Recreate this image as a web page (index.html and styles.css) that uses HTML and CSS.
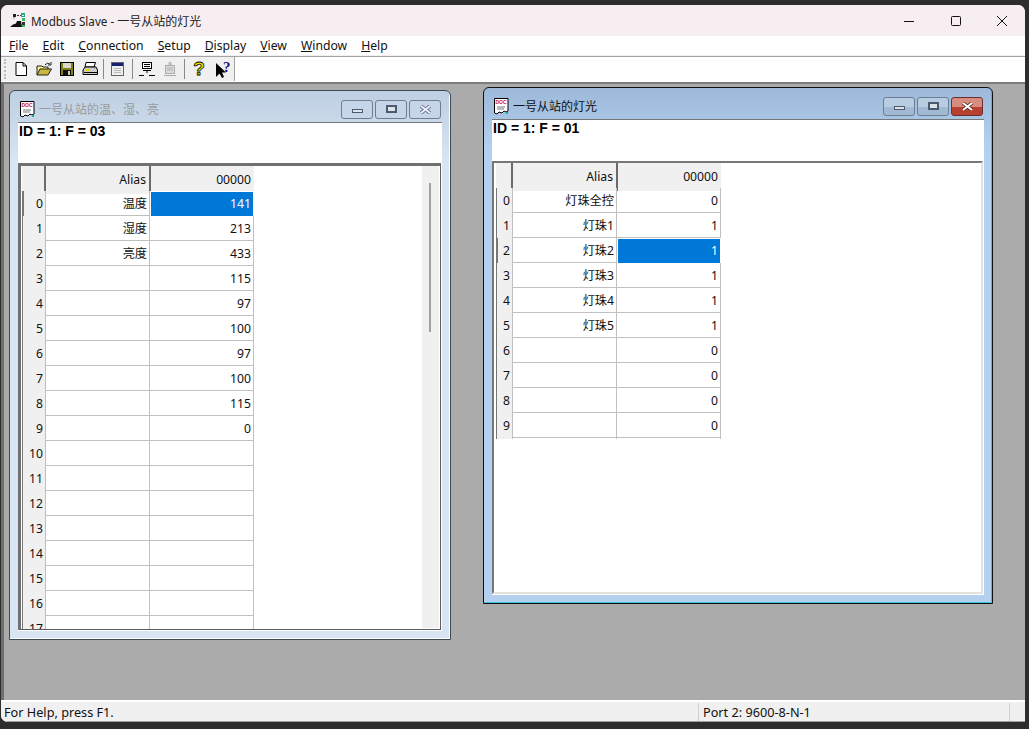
FILE: index.html
```html
<!DOCTYPE html>
<html lang="zh">
<head>
<meta charset="utf-8">
<title>Modbus Slave</title>
<link rel="stylesheet" href="styles.css">
</head>
<body>
<div class="app">
  <div class="titlebar">
    <svg class="app-icon" viewBox="0 0 16 16" width="16" height="16"><path d="M0 14L3 11.500L6 10.500L7 8L11 8L12 14Z" fill="#111"/><path d="M4 2.500H12M4 2.500V6" stroke="#333" stroke-dasharray="2 1" fill="none"/><rect x="3" y="1" width="3" height="3" fill="#222"/><rect x="11" y="0" width="4" height="4" fill="#2a8"/><rect x="12" y="2" width="2" height="1" fill="#fff"/><rect x="12" y="5" width="3" height="3" fill="#3b6"/><rect x="12" y="9" width="3" height="3" fill="#333"/><rect x="12" y="12" width="3" height="2" fill="#3b6"/></svg>
    <span class="app-title">Modbus Slave - <span class="cjk">一号从站的灯光</span></span>
    <div class="caption">
      <svg viewBox="0 0 10 10" width="10" height="10"><path d="M0 5.500H10" stroke="#111"/></svg>
      <svg viewBox="0 0 10 10" width="10" height="10"><rect x=".5" y=".5" width="9" height="9" rx="1" fill="none" stroke="#111"/></svg>
      <svg viewBox="0 0 10 10" width="10" height="10"><path d="M0 0L10 10M10 0L0 10" stroke="#111"/></svg>
    </div>
  </div>
  <nav class="menu">
    <span><u>F</u>ile</span><span><u>E</u>dit</span><span><u>C</u>onnection</span><span><u>S</u>etup</span><span><u>D</u>isplay</span><span><u>V</u>iew</span><span><u>W</u>indow</span><span><u>H</u>elp</span>
  </nav>
  <div class="toolbar">
    <div class="tools">
      <div class="grip"></div>
      <svg class="ic" viewBox="0 0 16 16"><path d="M3 1.500H10L13.500 5V14.500H3Z" fill="#fff" stroke="#000"/><path d="M10 1.500V5H13.500" fill="none" stroke="#000"/></svg>
      <svg class="ic" viewBox="0 0 16 16"><path d="M1 14V5H6L7 6H12V8" fill="#f6f090" stroke="#222"/><path d="M1 14L4 8H15.500L12 14Z" fill="#c8b840" stroke="#222"/><path d="M9 4Q11 1 14 3M15 1V4H12" fill="none" stroke="#222"/></svg>
      <svg class="ic" viewBox="0 0 16 16"><rect x="1.500" y="1.500" width="13" height="13" fill="#80801a" stroke="#000"/><rect x="4" y="2" width="8" height="5" fill="#d8d8c8"/><rect x="4" y="9" width="8" height="5" fill="#111"/><rect x="9" y="10" width="2" height="4" fill="#ccc"/></svg>
      <svg class="ic" viewBox="0 0 16 16"><path d="M4 1.500H13.500L12 6H3Z" fill="#fff" stroke="#000"/><path d="M3 6H14L15.500 9V13.500H1V9Z" fill="#ccc" stroke="#000"/><path d="M4 9H8" stroke="#dd0" stroke-width="2"/><path d="M2 11.500H15M5 13.500H15" stroke="#000"/></svg>
      <i class="sep s1"></i>
      <svg class="ic" viewBox="0 0 16 16"><rect x="2.500" y="1.500" width="12" height="13" fill="#eee" stroke="#666"/><rect x="3" y="2" width="11" height="3" fill="#12216e"/><path d="M5 7.500H12M5 9.500H12M5 11.500H12" stroke="#bbb"/></svg>
      <i class="sep"></i>
      <svg class="ic" viewBox="0 0 16 16"><rect x="3.500" y="1.500" width="9" height="6" fill="#fff" stroke="#000"/><path d="M5 3.500H11M5 5.500H11M4 9.500H12M8 10V12M0 14.500H5M10 14.500H16" stroke="#000"/></svg>
      <svg class="ic" viewBox="0 0 16 16"><rect x="6.500" y="1" width="3" height="3" fill="#bbb"/><rect x="3.500" y="4.500" width="9" height="8" fill="#ddd" stroke="#aaa"/><path d="M5 7H11M5 9H11M2 14.500H14" stroke="#aaa"/></svg>
      <i class="sep s3"></i>
      <span class="q">?</span>
      <svg class="ic ic-h" viewBox="0 0 16 16"><path d="M1 1V15L4.500 11.500L7 16L9 15L7 10.500H11Z" fill="#000"/></svg>
      <span class="q2">?</span>
    </div>
  </div>
  <div class="workspace">
    <section class="win win-a inactive">
      <header class="win-head">
        <svg class="doc" viewBox="0 0 16 17"><path d="M1.500 .5H15V13L13 14L11 13L9 15L6 14L4 16L1.500 15Z" fill="#fff" stroke="#000"/><text x="2.500" y="6" class="doc-t">DOC</text><path d="M4 9H12M4 11H11" stroke="#777"/><rect x="13" y="14" width="2" height="2" fill="#2a9"/></svg>
        <span class="win-title">一号从站的温、湿、亮</span>
        <div class="btns"><b class="btn"><i class="g-min"></i></b><b class="btn"><i class="g-max"></i></b><b class="btn"><svg class="g-x" viewBox="0 0 13 9"><path d="M2 1L11 8M11 1L2 8" stroke="#5a6a80" stroke-width="3.500"/><path d="M2 1L11 8M11 1L2 8" stroke="#eef" stroke-width="2"/></svg></b></div>
      </header>
      <div class="win-body">
        <div class="info">ID = 1: F = 03</div>
        <div class="view">
          <div class="grid">
            <div class="r hd"><span class="rh"></span><span class="c">Alias</span><span class="c vhd">00000</span></div>
            <div class="r"><span class="rh cur">0</span><span class="c">温度</span><span class="c sel">141</span></div>
            <div class="r"><span class="rh">1</span><span class="c">湿度</span><span class="c">213</span></div>
            <div class="r"><span class="rh">2</span><span class="c">亮度</span><span class="c">433</span></div>
            <div class="r"><span class="rh">3</span><span class="c"></span><span class="c">115</span></div>
            <div class="r"><span class="rh">4</span><span class="c"></span><span class="c">97</span></div>
            <div class="r"><span class="rh">5</span><span class="c"></span><span class="c">100</span></div>
            <div class="r"><span class="rh">6</span><span class="c"></span><span class="c">97</span></div>
            <div class="r"><span class="rh">7</span><span class="c"></span><span class="c">100</span></div>
            <div class="r"><span class="rh">8</span><span class="c"></span><span class="c">115</span></div>
            <div class="r"><span class="rh">9</span><span class="c"></span><span class="c">0</span></div>
            <div class="r"><span class="rh">10</span><span class="c"></span><span class="c"></span></div>
            <div class="r"><span class="rh">11</span><span class="c"></span><span class="c"></span></div>
            <div class="r"><span class="rh">12</span><span class="c"></span><span class="c"></span></div>
            <div class="r"><span class="rh">13</span><span class="c"></span><span class="c"></span></div>
            <div class="r"><span class="rh">14</span><span class="c"></span><span class="c"></span></div>
            <div class="r"><span class="rh">15</span><span class="c"></span><span class="c"></span></div>
            <div class="r"><span class="rh">16</span><span class="c"></span><span class="c"></span></div>
            <div class="r"><span class="rh">17</span><span class="c"></span><span class="c"></span></div>
          </div>
          <div class="vscroll"><i></i></div>
        </div>
      </div>
    </section>
    <section class="win win-b">
      <header class="win-head">
        <svg class="doc" viewBox="0 0 16 17"><path d="M1.500 .5H15V13L13 14L11 13L9 15L6 14L4 16L1.500 15Z" fill="#fff" stroke="#000"/><text x="2.500" y="6" class="doc-t">DOC</text><path d="M4 9H12M4 11H11" stroke="#777"/><rect x="13" y="14" width="2" height="2" fill="#2a9"/></svg>
        <span class="win-title">一号从站的灯光</span>
        <div class="btns"><b class="btn"><i class="g-min"></i></b><b class="btn"><i class="g-max"></i></b><b class="btn close"><svg class="g-x" viewBox="0 0 13 9"><path d="M2 1L11 8M11 1L2 8" stroke="#5a2a20" stroke-width="3.500"/><path d="M2 1L11 8M11 1L2 8" stroke="#fff" stroke-width="2"/></svg></b></div>
      </header>
      <div class="win-body">
        <div class="info">ID = 1: F = 01</div>
        <div class="view">
          <div class="grid">
            <div class="r hd"><span class="rh"></span><span class="c">Alias</span><span class="c vhd">00000</span></div>
            <div class="r"><span class="rh">0</span><span class="c">灯珠全控</span><span class="c">0</span></div>
            <div class="r"><span class="rh">1</span><span class="c">灯珠1</span><span class="c">1</span></div>
            <div class="r"><span class="rh cur">2</span><span class="c">灯珠2</span><span class="c sel">1</span></div>
            <div class="r"><span class="rh">3</span><span class="c">灯珠3</span><span class="c">1</span></div>
            <div class="r"><span class="rh">4</span><span class="c">灯珠4</span><span class="c">1</span></div>
            <div class="r"><span class="rh">5</span><span class="c">灯珠5</span><span class="c">1</span></div>
            <div class="r"><span class="rh">6</span><span class="c"></span><span class="c">0</span></div>
            <div class="r"><span class="rh">7</span><span class="c"></span><span class="c">0</span></div>
            <div class="r"><span class="rh">8</span><span class="c"></span><span class="c">0</span></div>
            <div class="r"><span class="rh">9</span><span class="c"></span><span class="c">0</span></div>
          </div>
        </div>
      </div>
    </section>
  </div>
  <footer class="status">
    <span class="st-main">For Help, press F1.</span>
    <span class="st-port">Port 2: 9600-8-N-1</span>
    <span class="st-grip"></span>
  </footer>
</div>
</body>
</html>
```
FILE: styles.css
```css
* { box-sizing: border-box; }
html, body { margin: 0; height: 100%; }
body {
  background: #2d2d2d;
  padding: 5px 4px 7px 1px;
  height: 729px;
  overflow: hidden;
  font: 12.700px "Noto Sans", "Noto Sans CJK SC", sans-serif;
  color: #111;
}
.app { height: 717px; display: flex; flex-direction: column; background: #fff; border-radius: 7px 7px 0 7px; overflow: hidden; }
.titlebar { height: 31px; flex: none; background: #f6eef1; display: flex; align-items: center; padding-left: 9px; }
.app-icon { margin-right: 5px; }
.app-title { font-size: 11.700px; color: #222; }
.cjk { font-size: 12px; }
.caption { margin-left: auto; display: flex; width: 138px; justify-content: space-between; padding: 0 18px 0 17px; align-items: center; }
.menu { height: 20px; flex: none; display: flex; gap: 14px; padding-left: 8px; align-items: center; border-bottom: 1px solid #f0f0f0; }
.menu span { font-size: 12.200px; }
.toolbar { height: 26px; flex: none; border-top: 1px solid #a5a5a5; background: #fff; }
.tools { width: 234px; height: 24px; background: #f0f0f0; border-right: 1px solid #a0a0a0; display: flex; align-items: center; padding-left: 3px; }
.grip { width: 3px; height: 20px; border-left: 2px dotted #bbb; margin-right: 6px; }
.ic { width: 16px; height: 16px; margin-right: 7px; flex: none; }
.ic-h { margin-right: 0; margin-top: 1px; }
.sep { width: 1px; height: 20px; background: #8a8a8a; margin: 0 6px 0 0; flex: none; }
.s1 { margin: 0 5px 0 -2px; }
.s3 { margin: 0 6px 0 -1px; }
.q { font: bold 19px/20px "Liberation Sans", sans-serif; color: #e8e800; -webkit-text-stroke: .8px #000; width: 16px; margin-right: 8px; text-align: center; }
.q2 { font: bold 15px/16px "Liberation Serif", serif; color: #15157a; margin: -4px 0 0 -8px; }
.workspace { position: relative; flex: 1; background: #ababab; border-top: 2px solid #7d7d7d; border-left: 3px solid #6f6f6f; }
.win { position: absolute; display: flex; flex-direction: column; border: 1px solid #3e4a52; border-radius: 6px 6px 0 0; padding: 0 8px 8px; }
.win-a { left: 5px; top: 6px; width: 442px; height: 550px; background: linear-gradient(#bdcfe2, #d9e5f2 70px); box-shadow: inset -1px -1px 0 #fff; }
.win-b { left: 479px; top: 3px; width: 510px; height: 517px; background: linear-gradient(#9cb9d9, #b4d0ef 60px); border-color: #111; box-shadow: inset -1px -1px 0 #3fc4e0; }
.win-head { height: 31px; flex: none; display: flex; align-items: center; padding: 5px 0 0 1px; }
.doc { width: 16px; height: 17px; margin-right: 4px; }
.doc-t { font: bold 5px "Liberation Sans", sans-serif; fill: #d01818; }
.win-title { font-size: 12px; }
.inactive .win-title { color: #9a9a9a; }
.btns { margin-left: auto; display: flex; gap: 2px; margin-right: 1px; }
.btn { width: 32px; height: 19px; border: 1px solid #6d7d92; border-radius: 3px; background: linear-gradient(#b9cde2 50%, #a2b9d4 50%); display: flex; align-items: center; justify-content: center; }
.inactive .btn { background: #c6d6e8; }
.close { background: linear-gradient(#d88b7f 50%, #b8402e 50%); border-color: #6a3030; }
.btn i { display: block; font-style: normal; }
.g-min { width: 11px; height: 4px; margin-top: 4px; background: #dde3ea; border: 1px solid #4c5a70; }
.g-max { width: 11px; height: 8px; border: 2px solid #4c5a70; background: #dde3ea; }
.g-x { width: 13px; height: 9px; }
.win-body { flex: 1; display: flex; flex-direction: column; background: #fff; min-height: 0; }
.info { height: 42px; flex: none; padding-left: 1px; font: bold 14px/16px "Liberation Sans", sans-serif; color: #000; border-top: 1px solid #777; }
.inactive .info { height: 41px; }
.view { flex: 1; min-height: 0; margin: 0 1px 1px 0; overflow: hidden; position: relative; border: 2px solid; border-color: #777 #e2e2e2 #e2e2e2 #777; padding: 0 0 0 2px; background: #fff; display: flex; }
.inactive .view { border-width: 3px 1px 1px 3px; border-color: #707070 #5c5c5c #5c5c5c #707070; padding-left: 1px; }
.grid { display: flex; flex-direction: column; font-size: 12.200px; }
.r { height: 25px; flex: none; display: grid; grid-template-columns: 24px 104px 104px; border-bottom: 1px solid #c0c0c0; }
.win-b .r { grid-template-columns: 17px 104px 104px; }
.rh { background: #f0f0f0; border-right: 1px solid #c0c0c0; border-left: 1px solid #777; text-align: right; padding-right: 2px; line-height: 26px; }
.c { text-align: right; padding-right: 2px; line-height: 26px; border-right: 1px solid #c0c0c0; }
.hd { border-bottom-color: #6a6a6a; }
.hd .rh { border-left-color: #f0f0f0; border-right: 2px solid #6a6a6a; }
.hd .c { background: #f0f0f0; line-height: 28px; border-right-color: #6a6a6a; padding-right: 3px; }
.hd .vhd { border-left: 1px solid #6a6a6a; border-right-color: #f0f0f0; padding-right: 2px; }
.sel { background: #0078d7; color: #fff; border: 1px solid #fff; line-height: 24px; }
.cur { border-left-width: 2px; }
.vscroll { position: absolute; right: 1px; top: 0; bottom: 1px; width: 17px; background: #f0f0f0; }
.vscroll i { display: block; width: 2px; height: 149px; margin: 17px 0 0 7px; background: #a0a0a0; }
.status { height: 22px; flex: none; display: flex; align-items: center; padding-top: 1px; background: #f0f0f0; border-top: 2px solid #fff; border-bottom: 1px solid #a0a0a0; }
.st-main { width: 697px; padding-left: 3px; }
.st-port { flex: 1; border-left: 1px solid #d0d0d0; padding-left: 4px; height: 18px; line-height: 18px; }
.st-grip { width: 16px; height: 18px; border-left: 1px solid #d0d0d0; }
```
